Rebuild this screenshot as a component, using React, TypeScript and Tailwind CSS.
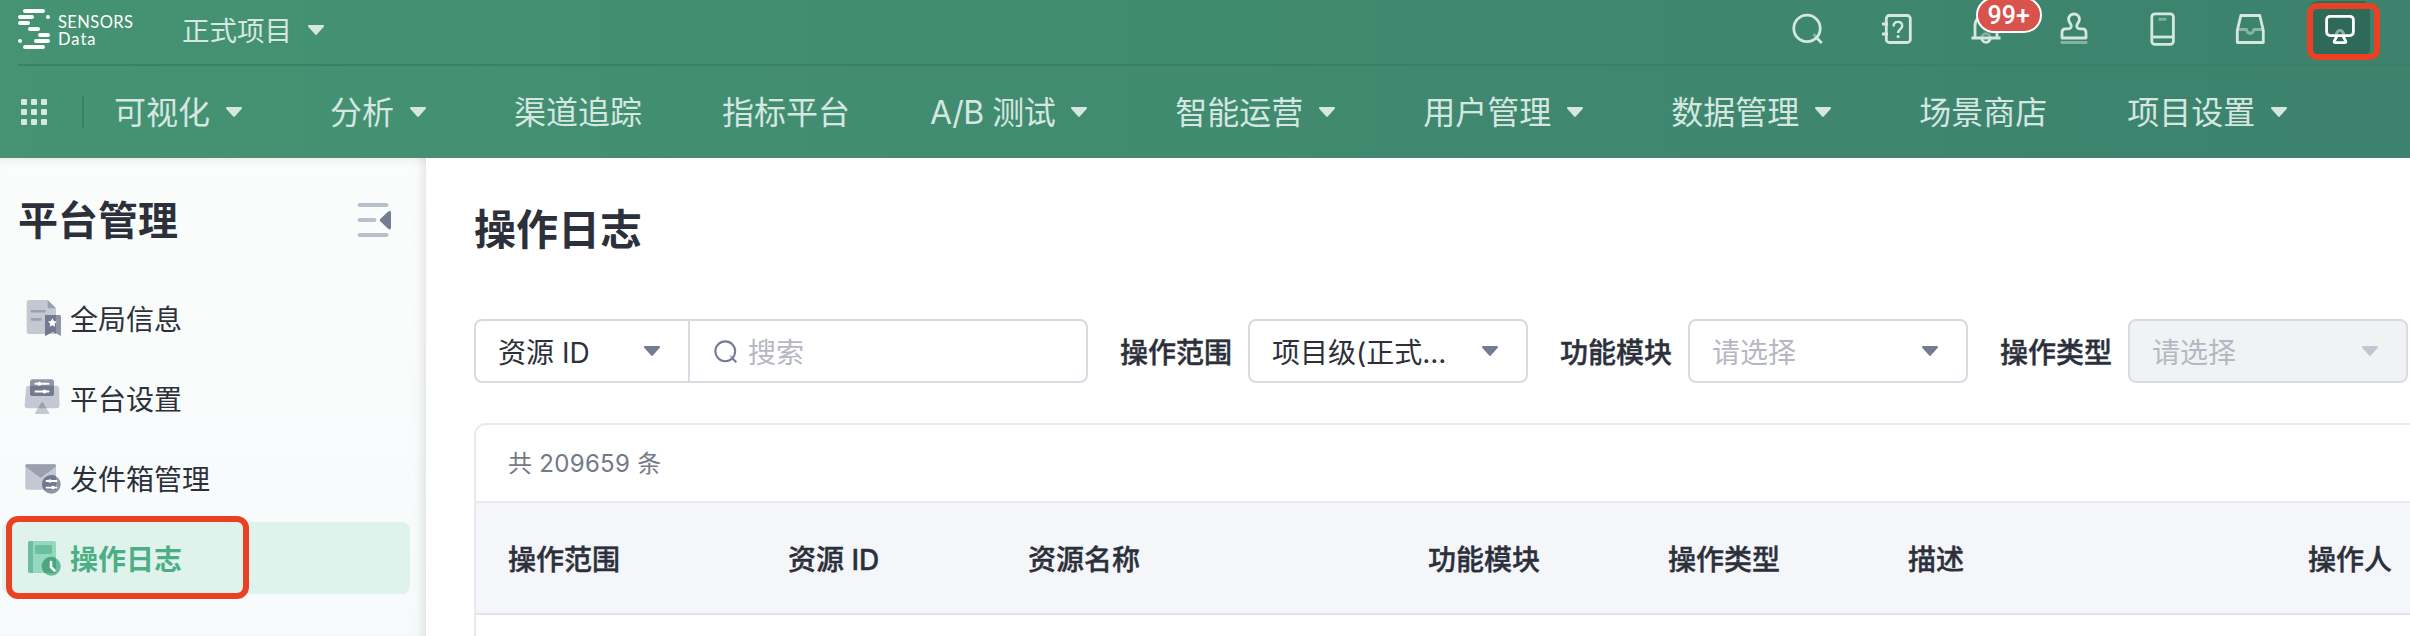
import { ReactNode } from "react";
import clsx from "clsx";

type NavItem = { label: string; dropdown?: boolean; tight?: boolean };

const NAV: NavItem[] = [
  { label: "可视化", dropdown: true },
  { label: "分析", dropdown: true },
  { label: "渠道追踪" },
  { label: "指标平台" },
  { label: "A/B 测试", dropdown: true, tight: true },
  { label: "智能运营", dropdown: true },
  { label: "用户管理", dropdown: true },
  { label: "数据管理", dropdown: true },
  { label: "场景商店" },
  { label: "项目设置", dropdown: true },
];

const COLUMNS = [
  { label: "操作范围", width: "w-[280px]" },
  { label: "资源 ID", width: "w-[240px]" },
  { label: "资源名称", width: "w-[400px]" },
  { label: "功能模块", width: "w-[240px]" },
  { label: "操作类型", width: "w-[240px]" },
  { label: "描述", width: "w-[400px]" },
  { label: "操作人", width: "w-[240px]" },
];

function Caret({ className }: { className?: string }) {
  return (
    <svg viewBox="0 0 16 10" className={clsx("h-[10px] w-4 shrink-0", className)} fill="currentColor">
      <path d="M1.2 0h13.6c1.1 0 1.6 1.2.8 2L9 9.3c-.6.8-1.4.8-2 0L.4 2C-.4 1.2.1 0 1.2 0z" />
    </svg>
  );
}

function Logo() {
  return (
    <svg viewBox="0 0 32 40" className="h-10 w-8" fill="#fff">
      <rect x="5" y="0" width="22" height="4" rx="2" />
      <rect x="0" y="6" width="16" height="4" rx="2" />
      <circle cx="30" cy="8" r="2" />
      <rect x="0" y="12" width="12" height="4" rx="2" />
      <rect x="10" y="18" width="12" height="4" rx="2" />
      <rect x="20" y="24" width="12" height="4" rx="2" />
      <circle cx="2" cy="32" r="2" />
      <rect x="16" y="30" width="16" height="4" rx="2" />
      <rect x="5" y="36" width="22" height="4" rx="2" />
    </svg>
  );
}

function ToolIcon({ children }: { children: ReactNode }) {
  return (
    <svg
      viewBox="0 0 32 34"
      className="h-[34px] w-8 overflow-visible"
      fill="none"
      stroke="currentColor"
      strokeWidth="2.8"
      strokeLinejoin="round"
    >
      {children}
    </svg>
  );
}

function SearchGlyph() {
  return (
    <>
      <circle cx="15" cy="16.4" r="13.2" />
      <path d="M21.5 22l3 3" opacity=".45" strokeWidth="3" />
      <path d="M24 25.2l5.8 5.8" />
    </>
  );
}

const TOOLS: { key: string; icon: ReactNode; badge?: string; active?: boolean }[] = [
  { key: "search", icon: <SearchGlyph /> },
  {
    key: "help",
    icon: (
      <>
        <rect x="5.3" y="3.5" width="24" height="27" rx="3" />
        <path d="M1 12h6M1 22h6" />
        <path d="M12.6 14.5c0-2.8 1.7-4.6 4.3-4.6s4.3 1.7 4.3 4c0 3.2-4 3.5-4 7.1" strokeWidth="2.4" />
        <circle cx="17.1" cy="24.6" r="1.6" fill="currentColor" stroke="none" />
      </>
    ),
  },
  {
    key: "notice",
    badge: "99+",
    icon: (
      <>
        <path d="M1.5 26h29M5 26V13.5C5 7.5 10 3 16 3s11 4.5 11 10.5V26" />
        <path d="M11.7 26a4.3 4.3 0 0 1 8.6 0" opacity=".45" />
        <path d="M11.7 26a4.3 4.3 0 0 0 8.6 0" />
      </>
    ),
  },
  {
    key: "stamp",
    icon: (
      <>
        <path d="M4 26V20.5c0-2.2 1.5-3.7 3.7-3.7h2.6c2 0 3.2-1.3 2.9-3.3-.3-1.900-2.600-3.200-2.600-6.300 0-3.100 2.300-5.200 5.400-5.200s5.400 2.100 5.400 5.200c0 3.100-2.300 4.400-2.600 6.300-.3 2 .9 3.300 2.900 3.300h2.600c2.200 0 3.700 1.500 3.700 3.700V26z" />
        <path d="M2.7 30.5h26.6" opacity=".5" />
      </>
    ),
  },
  {
    key: "phone",
    icon: (
      <>
        <rect x="4.8" y="1.8" width="21.6" height="30.5" rx="3" />
        <path d="M5 25h21" />
        <path d="M11.5 7.3h8" opacity=".45" />
      </>
    ),
  },
  {
    key: "inbox",
    icon: (
      <>
        <path d="M2 17.5h9.5c.5 2.8 1.7 4 3.7 4s3.200-1.200 3.700-4h9.500" opacity=".5" />
        <path d="M2.3 30.5v-12L5.800 3.500h19l3.500 15v12z" />
      </>
    ),
  },
  {
    key: "platform",
    active: true,
    icon: (
      <>
        <path d="M12.5 23.500v-2c1.500-4 5.500-4 7 0v2" opacity=".45" />
        <rect x="2.600" y="4.300" width="26.800" height="19.300" rx="3.500" />
        <path d="M12.700 24.500l-2.400 4.700c-.4.900 0 1.500.9 1.500h9.600c.9 0 1.300-.6.9-1.500L19.300 24.500" />
      </>
    ),
  },
];

function TopBar() {
  return (
    <header className="h-[158px] overflow-hidden bg-linear-to-r from-[#459373] to-[#3c826d] text-[#d4e7e0]">
      <div className="flex h-16 items-start justify-between">
        <div className="flex items-start pl-[18px]">
          <div className="flex items-center gap-2 pt-[9px]">
            <Logo />
            <div className="w-[78px] pt-[3px] font-[Lato,sans-serif] text-[16.5px] leading-[16.5px] whitespace-nowrap text-white">
              <div className="tracking-[0.4px]">SENSORS</div>
              <div className="tracking-[1px]">Data</div>
            </div>
          </div>
          <button className="ml-[46px] flex h-[60px] items-center gap-4 text-[27.5px]">
            <span className="pt-[3px]">正式项目</span>
            <Caret />
          </button>
        </div>
        <div className="flex gap-[28.6px] pt-px pr-10">
          {TOOLS.map((t) => (
            <button
              key={t.key}
              className={clsx(
                "relative flex h-14 w-[60px] items-start justify-center rounded-lg pt-[11px]",
                t.active && "bg-[#2f6a59] text-white",
              )}
            >
              <ToolIcon>{t.icon}</ToolIcon>
              {t.badge && (
                <span className="absolute -top-[4px] left-5 flex h-9 w-[66px] items-center justify-center rounded-full border-2 border-white bg-[#d9534d] pt-px font-[Roboto,sans-serif] text-[25px] font-medium text-white">
                  {t.badge}
                </span>
              )}
              {t.active && (
                <span className="absolute top-[2px] -left-[3px] h-[57px] w-[73px] rounded-[10px] border-6 border-[#ea4125]" />
              )}
            </button>
          ))}
        </div>
      </div>
      <div className="ml-[18px] h-[2px] bg-[#3a7f66]" />
      <nav className="flex h-[92px] items-center pl-[21px]">
        <div className="grid grid-cols-3 gap-1">
          {Array.from({ length: 9 }, (_, i) => (
            <span key={i} className="size-[6px] rounded-[1px] bg-[#d4e7e0]" />
          ))}
        </div>
        <div className="ml-[35px] h-8 w-[2px] bg-[#3a8267]" />
        <div className="ml-[30px] flex gap-20 text-[32px] whitespace-nowrap">
          {NAV.map((item) => (
            <button key={item.label} className="flex items-center">
              <span className={clsx("pt-[2px]", item.tight && "tracking-[-0.5px]")}>{item.label}</span>
              {item.dropdown && <Caret className="mr-2 ml-4" />}
            </button>
          ))}
        </div>
      </nav>
    </header>
  );
}

const SIDE_ITEMS: { label: string; active?: boolean; icon: ReactNode }[] = [
  {
    label: "全局信息",
    icon: (
      <>
        <path d="M5 2h18.7L32 10.5V34c0 1.2-.8 2-2 2H5c-1.2 0-2.3-.8-2.300-2V4c0-1.200 1.100-2 2.300-2z" fill="#c4c8d2" />
        <path d="M23.7 2L32 10.3h-6.800c-1 0-1.500-.6-1.500-1.500z" fill="#9ba0b0" />
        <path d="M8 13.3h12.5M8 21.4h8.5" stroke="#9ba0b0" strokeWidth="2.6" strokeLinecap="round" />
        <path d="M21 17h14.5c1 0 1.500.6 1.500 1.500V38l-8-4.200L21 38z" fill="#9096a8" />
        <path d="M21 17h11v19l-3-2.200L21 38z" fill="#74798f" />
        <path d="M28.4 20.3l1.4 2.800 3 .4-2.200 2.200.5 3.100-2.700-1.500-2.700 1.500.5-3.100-2.200-2.200 3-.4z" fill="#fff" />
      </>
    ),
  },
  {
    label: "平台设置",
    icon: (
      <>
        <path d="M5 7.7h27c1.700 0 3 1 3.100 2.600l.4 17.200c0 1.700-1 2.700-2.700 2.700H3.300C1.600 30.200.6 29.200.6 27.500L2 10.300c.1-1.600 1.300-2.600 3-2.600z" fill="#c4c8d2" />
        <path d="M17 25c.6-1.100 1.800-1.100 2.400 0l5.700 9.700c.4.8 0 1.300-.8 1.300H12c-.8 0-1.200-.5-.8-1.300z" fill="#c4c8d2" />
        <path d="M17 25c.6-1.100 1.800-1.100 2.400 0l3 5.200H14z" fill="#9ba0b0" />
        <rect x="6" y="1.3" width="24" height="16.6" rx="2.5" fill="#9096a8" />
        <path d="M6 7.7h24v7.700c0 1.600-.9 2.500-2.500 2.500h-19C6.900 17.900 6 17 6 15.400z" fill="#74798f" />
        <path d="M11.5 5.7h13M11.5 13.4h13" stroke="#fff" strokeWidth="2" strokeLinecap="round" />
        <circle cx="15.3" cy="5.7" r="2" fill="#fff" />
        <circle cx="20.5" cy="13.4" r="2" fill="#fff" />
      </>
    ),
  },
  {
    label: "发件箱管理",
    icon: (
      <>
        <rect x="1.3" y="6.3" width="30.7" height="25.4" rx="2.5" fill="#c4c8d2" />
        <path d="M2.5 6.3h28.5c1.500.6 1.200 2 .3 2.800L17.500 19.300c-.6.5-1.200.5-1.800 0L2 9.100C1 8.200 1.200 6.700 2.500 6.300z" fill="#9ba0b0" />
        <circle cx="27.3" cy="26.3" r="9.4" fill="#9096a8" />
        <path d="M32 18.2v13.500H19.700a9.400 9.400 0 0 1 12.300-13.500z" fill="#74798f" />
        <path d="M22.5 23h10M22.5 29.6h10" stroke="#fff" strokeWidth="1.8" strokeLinecap="round" />
        <circle cx="26" cy="23" r="1.8" fill="#fff" />
        <circle cx="29" cy="29.6" r="1.8" fill="#fff" />
      </>
    ),
  },
  {
    label: "操作日志",
    active: true,
    icon: (
      <>
        <rect x="4" y="3" width="28" height="32" rx="2" fill="#97d6bf" />
        <path d="M6 3h3v32H6c-1.200 0-2-.8-2-2V5c0-1.200.8-2 2-2z" fill="#6cbf9e" />
        <rect x="11" y="7" width="17" height="9" rx="1.5" fill="#6cbf9e" />
        <circle cx="27.3" cy="28.3" r="9.4" fill="#62bd98" />
        <path d="M32 20.2V35H20.6A9.4 9.4 0 0 1 32 20.200z" fill="#4aa77e" />
        <path d="M27 24v5.300l3.500 3.200" stroke="#fff" strokeWidth="2.6" strokeLinecap="round" fill="none" />
      </>
    ),
  },
];

function Sidebar() {
  return (
    <aside className="w-[426px] shrink-0 bg-linear-to-b from-[#fbfdfc] to-[#f7fafb] shadow-[inset_-10px_0_12px_-8px_rgba(0,0,0,0.12),inset_0_10px_12px_-10px_rgba(0,0,0,0.10)]">
      <div className="flex h-[124px] items-center justify-between pr-[33px] pl-[18px]">
        <h2 className="pt-[2px] text-[40px] font-bold text-[#2c303b]">平台管理</h2>
        <svg viewBox="0 0 36 36" className="size-9" fill="none">
          <path d="M2.5 3h27M2.5 18h15M2.5 33h27" stroke="#b9bfcc" strokeWidth="4" strokeLinecap="round" />
          <path d="M34 10.8v14.900c0 1.800-1.700 2.200-2.800 1.100l-7.700-7.200c-.9-.8-.9-2 0-2.800l7.700-7.200c1.100-1 2.800-.6 2.800 1.200z" fill="#747c93" />
        </svg>
      </div>
      <ul className="flex flex-col gap-2 pr-4 pl-[2px] text-[28px] text-[#2c303b]">
        {SIDE_ITEMS.map((item) => (
          <li
            key={item.label}
            className={clsx(
              "relative flex h-18 items-center rounded-lg pl-[22px]",
              item.active && "bg-[#e0f2ec] font-bold text-[#4baf85]",
            )}
          >
            <svg viewBox="0 0 40 40" className="size-10 shrink-0">
              {item.icon}
            </svg>
            <span className="ml-[6px] pt-[3px]">{item.label}</span>
            {item.active && (
              <span className="absolute -top-[6px] left-1 h-[83px] w-[243px] rounded-xl border-6 border-[#ea4125]" />
            )}
          </li>
        ))}
      </ul>
    </aside>
  );
}

function FilterSelect({
  label,
  value,
  placeholder,
  disabled,
}: {
  label: string;
  value?: string;
  placeholder?: string;
  disabled?: boolean;
}) {
  return (
    <div className="flex items-center gap-4">
      <span className="pt-[3px] font-medium [-webkit-text-stroke:0.4px_currentColor]">{label}</span>
      <div
        className={clsx(
          "flex h-16 w-[280px] items-center justify-between rounded-lg border-2 border-[#d8dbe2] pr-7 pl-[22px]",
          disabled && "bg-[#f1f2f4]",
        )}
      >
        <span className={clsx("pt-[3px]", !value && "text-[#b5b8c2]")}>{value ?? placeholder}</span>
        <Caret className={disabled ? "text-[#c3c6d0]" : "text-[#747c93]"} />
      </div>
    </div>
  );
}

export default function App() {
  return (
    <div className="flex h-[636px] w-[2410px] flex-col overflow-hidden bg-white font-[Inter,'Noto_Sans_CJK_SC',sans-serif] text-[28px] text-[#2c303b]">
      <TopBar />
      <div className="flex min-h-0 flex-1">
        <Sidebar />
        <main className="min-w-0 flex-1 overflow-hidden pl-12 whitespace-nowrap">
          <h1 className="flex h-[161px] items-center pb-[19px] text-[42px] font-bold">操作日志</h1>

          <div className="flex gap-8">
            <div className="flex h-16 w-[614px] shrink-0 rounded-lg border-2 border-[#d8dbe2]">
              <div className="flex w-[214px] items-center justify-between border-r-2 border-[#d8dbe2] pr-7 pl-[22px]">
                <span className="pt-[3px]">资源 ID</span>
                <Caret className="text-[#747c93]" />
              </div>
              <div className="flex items-center gap-[10px] pl-6 text-[#b5b8c2]">
                <svg viewBox="0 0 32 32" className="size-6 text-[#747c93]" fill="none" stroke="currentColor" strokeWidth="2.8">
                  <SearchGlyph />
                </svg>
                <span className="pt-[3px]">搜索</span>
              </div>
            </div>
            <FilterSelect label="操作范围" value="项目级(正式..." />
            <FilterSelect label="功能模块" placeholder="请选择" />
            <FilterSelect label="操作类型" placeholder="请选择" disabled />
          </div>

          <div className="mt-10 h-[260px] w-[2100px] rounded-xl border-2 border-[#e9eaef]">
            <div className="flex h-[78px] items-center border-b-2 border-[#e9eaef] pt-[2px] pl-8 text-2xl tracking-[0.3px] text-[#747986]">
              共 209659 条
            </div>
            <div className="flex h-28 items-center border-b-2 border-[#e2e4ea] bg-[#f5f6fa] pt-[3px] pl-8 font-medium [-webkit-text-stroke:0.4px_currentColor]">
              {COLUMNS.map((c) => (
                <div key={c.label} className={clsx("shrink-0", c.width)}>
                  {c.label}
                </div>
              ))}
            </div>
          </div>
        </main>
      </div>
    </div>
  );
}
